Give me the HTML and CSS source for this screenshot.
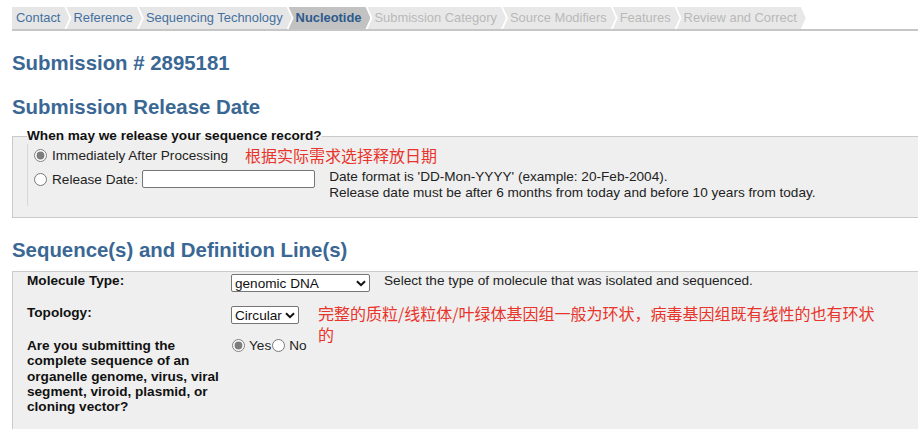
FILE: index.html
```html
<!DOCTYPE html>
<html lang="en">
<head>
<meta charset="utf-8">
<title>Submission</title>
<link rel="stylesheet" href="styles.css">
</head>
<body>
<div class="page">
  <ul class="tabs">
    <li class="tab done first">Contact</li>
    <li class="tab done">Reference</li>
    <li class="tab done">Sequencing Technology</li>
    <li class="tab active">Nucleotide</li>
    <li class="tab todo">Submission Category</li>
    <li class="tab todo">Source Modifiers</li>
    <li class="tab todo">Features</li>
    <li class="tab todo last">Review and Correct</li>
  </ul>

  <h1 class="heading">Submission # 2895181</h1>
  <h2 class="heading">Submission Release Date</h2>

  <fieldset class="release-box">
    <legend class="release-legend">When may we release your sequence record?</legend>
    <div class="release">
      <div class="release-row first-row">
        <input class="radio" type="radio" name="rel" checked>
        <span class="opt">Immediately After Processing</span>
        <span class="note-cn note-cn-1">根据实际需求选择释放日期</span>
      </div>
      <div class="release-row second-row">
        <div class="date-group">
          <input class="radio" type="radio" name="rel">
          <span class="opt">Release Date:</span>
          <input class="date-input" type="text">
        </div>
        <div class="date-note">
          Date format is 'DD-Mon-YYYY' (example: 20-Feb-2004).<br>
          Release date must be after 6 months from today and before 10 years from today.
        </div>
      </div>
    </div>
  </fieldset>

  <h2 class="heading seq-heading">Sequence(s) and Definition Line(s)</h2>

  <div class="seq-box">
    <div class="seq-grid">
      <div class="lbl">Molecule Type:</div>
      <div class="val val-1">
        <span class="sel-wrap sel-mol">
          <select class="sel"><option>genomic DNA</option></select>
          <svg class="chev" width="10" height="7" viewBox="0 0 10 7"><path d="M1 1.2 L5 5.2 L9 1.2" fill="none" stroke="#111" stroke-width="2"/></svg>
        </span>
        <span class="hint">Select the type of molecule that was isolated and sequenced.</span>
      </div>

      <div class="lbl">Topology:</div>
      <div class="val val-2">
        <span class="sel-wrap sel-topo">
          <select class="sel"><option>Circular</option></select>
          <svg class="chev" width="10" height="7" viewBox="0 0 10 7"><path d="M1 1.2 L5 5.2 L9 1.2" fill="none" stroke="#111" stroke-width="2"/></svg>
        </span>
        <span class="note-cn note-cn-2">完整的质粒/线粒体/叶绿体基因组一般为环状，病毒基因组既有线性的也有环状的</span>
      </div>

      <div class="lbl lbl-long">Are you submitting the complete sequence of an organelle genome, virus, viral segment, viroid, plasmid, or cloning vector?</div>
      <div class="val val-3">
        <input class="radio yn" type="radio" name="comp" checked><span class="yn-text">Yes</span>
        <input class="radio yn" type="radio" name="comp"><span class="yn-text">No</span>
      </div>
    </div>
  </div>
</div>
</body>
</html>
```

FILE: styles.css
```css
html, body {
  margin: 0;
  padding: 0;
  background: #ffffff;
  overflow: hidden;
}

body {
  font-family: "Liberation Sans", Arial, "Noto Sans CJK SC", sans-serif;
  font-size: 13.6px;
  color: #111111;
}

.page {
  padding-top: 7px;
  width: 918px;
  height: 429px;
  box-sizing: border-box;
  overflow: hidden;
}

/* ---------- tabs ---------- */
.tabs {
  list-style: none;
  margin: 0 0 0 12px;
  padding: 0;
  display: flex;
  border-bottom: 2px solid #c6c6c6;
}

.tab {
  height: 22px;
  line-height: 22px;
  font-size: 12.9px;
  padding: 0 9px 0 7px;
  margin-left: -3px;
  background: #e6e6e6;
  white-space: nowrap;
  clip-path: polygon(0 0, calc(100% - 5px) 0, 100% 50%, calc(100% - 5px) 100%, 0 100%, 5px 50%);
}

.tab.first {
  margin-left: 0;
  padding-left: 4px;
  clip-path: polygon(0 0, calc(100% - 5px) 0, 100% 50%, calc(100% - 5px) 100%, 0 100%);
}

.tab.done {
  color: #44709f;
}

.tab.active {
  background: #c2c2c2;
  color: #2c5a8c;
  font-weight: bold;
}

.tab.todo {
  color: #b9b9b9;
  background: #e8e8e8;
}

/* ---------- headings ---------- */
.heading {
  margin: 20px 0 0 12px;
  font-size: 20.4px;
  line-height: 24px;
  font-weight: bold;
  color: #3a6794;
}

/* ---------- release fieldset ---------- */
.release-box {
  margin: 9px 0 0 12px;
  padding: 0 0 11px 14px;
  border: 1px solid #cacaca;
  border-right: 0;
  background: #efefef;
  min-width: 0;
}

.release-legend {
  padding: 0;
  font-weight: bold;
  line-height: 16px;
  color: #111111;
}

.release {
  border-left: 1px solid #d8d8d8;
  padding-bottom: 5px;
}

.release-row {
  display: flex;
}

.first-row {
  height: 22px;
  align-items: center;
}

.second-row {
  align-items: flex-start;
  padding-top: 3px;
}

.date-group {
  display: flex;
  align-items: center;
  height: 18px;
  margin-top: 1px;
}

.radio {
  width: 13px;
  height: 13px;
  margin: 0 5px 0 6px;
  accent-color: #7d7d7d;
  flex: none;
}

.opt {
  color: #222222;
  white-space: nowrap;
}

.date-input {
  margin: 0 0 0 4px;
  width: 173px;
  height: 18px;
  box-sizing: border-box;
  border: 1px solid #767676;
  border-radius: 2px;
  padding: 0 2px;
  background: #ffffff;
  font: inherit;
}

.date-note {
  margin-left: 14px;
  line-height: 16px;
  color: #222222;
  white-space: nowrap;
}

.note-cn {
  font-family: "Noto Sans CJK SC", "Liberation Sans", sans-serif;
  font-size: 16px;
  color: #e8342b;
}

.note-cn-1 {
  margin-left: 17px;
  line-height: 21px;
  white-space: nowrap;
}

/* ---------- sequence box ---------- */
.seq-box {
  margin: 9px 0 0 12px;
  padding: 1px 0 0 14px;
  border-top: 1px solid #cacaca;
  border-left: 1px solid #cacaca;
  background: #efefef;
  height: 200px;
}

.seq-grid {
  display: grid;
  grid-template-columns: 204px 1fr;
  grid-template-rows: 32px 33px auto;
}

.lbl {
  font-weight: bold;
  line-height: 16px;
  padding-right: 8px;
  color: #111111;
}

.lbl-long {
  line-height: 15.3px;
}

.val {
  display: flex;
  align-items: flex-start;
}

.sel-wrap {
  display: inline-flex;
  align-items: center;
  box-sizing: border-box;
  height: 18px;
  margin-top: 1px;
  border: 1px solid #767676;
  border-radius: 2px;
  background: #ffffff;
  flex: none;
}

.sel {
  appearance: none;
  -webkit-appearance: none;
  border: 0;
  background: transparent;
  padding: 0 0 0 3px;
  margin: 0;
  height: 16px;
  flex: 1;
  min-width: 0;
  font-family: "Liberation Sans", Arial, sans-serif;
  font-size: 13.6px;
  color: #111111;
  outline: none;
}

.chev {
  flex: none;
  margin-right: 3px;
}

.sel-mol {
  width: 139px;
}

.sel-topo {
  width: 68px;
}

.hint {
  margin-left: 14px;
  line-height: 16px;
  color: #222222;
  white-space: nowrap;
}

.note-cn-2 {
  margin-left: 19px;
  margin-top: -2px;
  width: 565px;
  line-height: 21px;
}

.val-3 {
  align-items: center;
  height: 15.3px;
}

.radio.yn {
  margin: 0 4px 0 1px;
}

.yn-text {
  color: #222222;
}
```
